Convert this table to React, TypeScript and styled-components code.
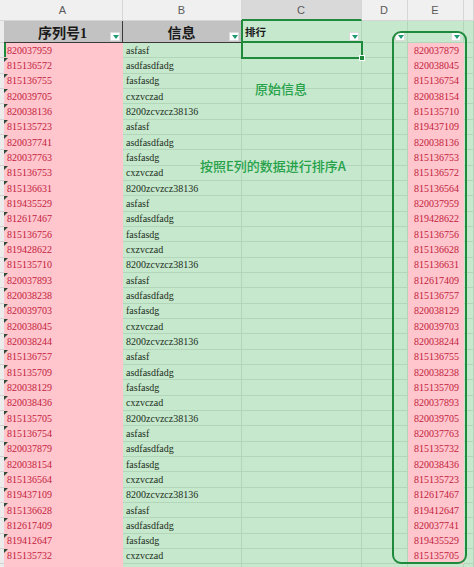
import React from 'react';
import styled, { createGlobalStyle, css } from 'styled-components';

const GlobalStyle = createGlobalStyle`
  html, body { margin: 0; padding: 0; background: #fff; overflow: hidden; }
  #root { width: 474px; height: 567px; }
`;

const COLS = '4px 119px 119px 120px 46px 56px 10px';
const GREEN_LINE = '#1f8a3c';

type Tone = 'pink' | 'green' | 'gray' | 'head' | 'rowhead' | 'headSel';

const tones: Record<Tone, { bg: string; line: string }> = {
  pink: { bg: '#ffc6cd', line: '#ffc6cd' },
  green: { bg: '#c6e8cd', line: '#b3d6ba' },
  gray: { bg: '#c2c2c2', line: '#3a3a3a' },
  head: { bg: '#f0f0f0', line: '#d6d6d6' },
  headSel: { bg: '#d9d9d9', line: '#d6d6d6' },
  rowhead: { bg: '#ececec', line: '#d2d2d2' },
};

const Sheet = styled.div`
  position: relative;
  width: 474px;
  height: 567px;
  overflow: hidden;
  font-family: "Liberation Serif", serif;
`;

const Row = styled.div<{ $h: number }>`
  display: grid;
  grid-template-columns: ${COLS};
  height: ${(p) => p.$h}px;
`;

const Cell = styled.div<{
  $tone: Tone;
  $align?: 'left' | 'right' | 'center';
  $mark?: 'tri' | 'bar';
  $sel?: boolean;
}>`
  position: relative;
  box-sizing: border-box;
  display: flex;
  align-items: center;
  justify-content: ${(p) => (p.$align === 'right' ? 'flex-end' : p.$align === 'center' ? 'center' : 'flex-start')};
  padding: 0 4px 0 3px;
  background: ${(p) => tones[p.$tone].bg};
  border-right: 1px solid ${(p) => tones[p.$tone].line};
  border-bottom: 1px solid ${(p) => tones[p.$tone].line};
  overflow: visible;
  white-space: nowrap;
  ${(p) =>
    p.$mark === 'tri' &&
    css`
      &::before {
        content: '';
        position: absolute;
        left: 0;
        top: 0;
        border-top: 4px solid #2e4a36;
        border-right: 4px solid transparent;
      }
    `}
  ${(p) =>
    p.$mark === 'bar' &&
    css`
      box-shadow: inset 2px 0 0 ${GREEN_LINE};
    `}
  ${(p) =>
    p.$sel &&
    css`
      border-bottom: 2px solid ${GREEN_LINE};
    `}
`;

const ColLetter = styled.span`
  font-family: "Liberation Sans", "DejaVu Sans", sans-serif;
  font-size: 11px;
  color: #5a5a5a;
`;

const RedNum = styled.span`
  font-size: 10px;
  color: #c21a3c;
`;

const DarkText = styled.span`
  font-size: 10px;
  color: #1d2f22;
`;

const TitleText = styled.span`
  font-family: "Liberation Serif", "Noto Sans CJK SC", serif;
  font-size: 14px;
  font-weight: 700;
  color: #1a1a1a;
`;

const SmallTitle = styled.span`
  font-family: "Noto Sans CJK SC", sans-serif;
  font-size: 10.5px;
  font-weight: 700;
  color: #1a1a1a;
`;

const Drop = styled.span`
  position: absolute;
  right: 2px;
  bottom: 1px;
  width: 10px;
  height: 9px;
  box-sizing: border-box;
  background: #fff;
  border: 1px solid #dcdcdc;
  &::after {
    content: '';
    position: absolute;
    left: 1.5px;
    top: 2px;
    border-top: 4px solid #1f9a72;
    border-left: 3px solid transparent;
    border-right: 3px solid transparent;
  }
`;

const Note = styled.div<{ $x: number; $y: number }>`
  position: absolute;
  left: ${(p) => p.$x}px;
  top: ${(p) => p.$y}px;
  font-family: "Noto Sans CJK SC", "Liberation Sans", sans-serif;
  font-size: 13px;
  font-weight: 500;
  line-height: 15px;
  color: #27a24a;
  white-space: nowrap;
`;

const Frame = styled.div`
  position: absolute;
  left: 392px;
  top: 31px;
  width: 75px;
  height: 533px;
  box-sizing: border-box;
  border: 2px solid ${GREEN_LINE};
  border-radius: 9px;
  pointer-events: none;
`;

const C1Edge = styled.div`
  position: absolute;
  left: 241px;
  top: 20px;
  width: 2px;
  height: 22px;
  background: ${GREEN_LINE};
`;

const ActiveBox = styled.div`
  position: absolute;
  left: 241px;
  top: 41px;
  width: 122px;
  height: 18px;
  box-sizing: border-box;
  border: 2px solid ${GREEN_LINE};
`;

const Handle = styled.div`
  position: absolute;
  left: 359px;
  top: 55px;
  width: 6px;
  height: 6px;
  box-sizing: border-box;
  background: ${GREEN_LINE};
  border: 1px solid #fff;
`;

const aVals = [
  '820037959', '815136572', '815136755', '820039705', '820038136', '815135723', '820037741',
  '820037763', '815136753', '815136631', '819435529', '812617467', '815136756', '819428622',
  '815135710', '820037893', '820038238', '820039703', '820038045', '820038244', '815136757',
  '815135709', '820038129', '820038436', '815135705', '815136754', '820037879', '820038154',
  '815136564', '819437109', '815136628', '812617409', '819412647', '815135732',
];

const eVals = [
  '820037879', '820038045', '815136754', '820038154', '815135710', '819437109', '820038136',
  '815136753', '815136572', '815136564', '820037959', '819428622', '815136756', '815136628',
  '815136631', '812617409', '815136757', '820038129', '820039703', '820038244', '815136755',
  '820038238', '815135709', '820037893', '820039705', '820037763', '815135732', '820038436',
  '815135723', '812617467', '819412647', '820037741', '819435529', '815135705',
];

const bCycle = ['asfasf', 'asdfasdfadg', 'fasfasdg', 'cxzvczad', '8200zcvzcz38136'];

const ROW_H = 46 / 3;

export default function App() {
  return (
    <>
      <GlobalStyle />
      <Sheet>
        <Row $h={21}>
          <Cell $tone="head" />
          <Cell $tone="head" $align="center"><ColLetter>A</ColLetter></Cell>
          <Cell $tone="head" $align="center"><ColLetter>B</ColLetter></Cell>
          <Cell $tone="headSel" $align="center" $sel><ColLetter>C</ColLetter></Cell>
          <Cell $tone="head" $align="center"><ColLetter>D</ColLetter></Cell>
          <Cell $tone="head" $align="center"><ColLetter>E</ColLetter></Cell>
          <Cell $tone="head" />
        </Row>
        <Row $h={22}>
          <Cell $tone="rowhead" />
          <Cell $tone="gray" $align="center"><TitleText>序列号1</TitleText><Drop /></Cell>
          <Cell $tone="gray" $align="center"><TitleText>信息</TitleText><Drop /></Cell>
          <Cell $tone="green"><SmallTitle>排行</SmallTitle><Drop /></Cell>
          <Cell $tone="green"><Drop /></Cell>
          <Cell $tone="green"><Drop /></Cell>
          <Cell $tone="green" />
        </Row>
        {aVals.map((a, i) => (
          <Row $h={ROW_H} key={i}>
            <Cell $tone="rowhead" />
            <Cell $tone="pink" $mark={i === 0 ? 'bar' : 'tri'}><RedNum>{a}</RedNum></Cell>
            <Cell $tone="green"><DarkText>{bCycle[i % 5]}</DarkText></Cell>
            <Cell $tone="green" />
            <Cell $tone="green" />
            <Cell $tone="pink" $align="right"><RedNum>{eVals[i]}</RedNum></Cell>
            <Cell $tone="green" />
          </Row>
        ))}
        <Row $h={ROW_H}>
          <Cell $tone="rowhead" />
          <Cell $tone="pink" />
          <Cell $tone="green" />
          <Cell $tone="green" />
          <Cell $tone="green" />
          <Cell $tone="green" />
          <Cell $tone="green" />
        </Row>

        <Note $x={255} $y={81}>原始信息</Note>
        <Note $x={200} $y={158}>按照E列的数据进行排序A</Note>
        <Frame />
        <C1Edge />
        <ActiveBox />
        <Handle />
      </Sheet>
    </>
  );
}
